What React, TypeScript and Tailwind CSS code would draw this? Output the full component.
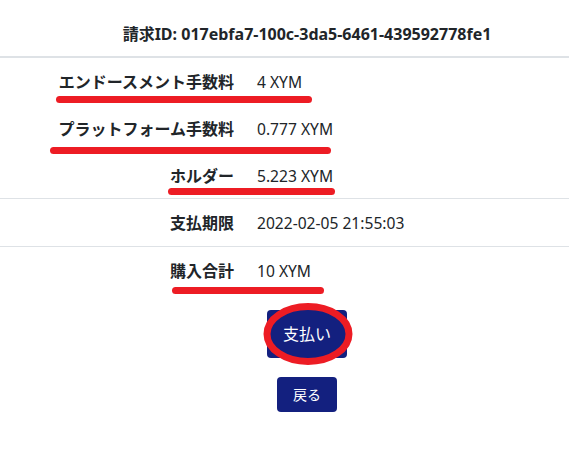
import React from "react";

const rows1 = [
  { label: "エンドースメント手数料", value: "4 XYM", h: "h-[47px]" },
  { label: "プラットフォーム手数料", value: "0.777 XYM", h: "h-[48px]" },
  { label: "ホルダー", value: "5.223 XYM", h: "h-[45px]" },
];

function Row({ label, value, h }: { label: string; value: string; h: string }) {
  return (
    <div className={`grid grid-cols-[246px_1fr] items-center ${h}`}>
      <div className="text-right pr-3 font-bold text-[16px] text-[#212529] leading-6">{label}</div>
      <div className="pl-[11px] text-[15.6px] text-[#212529] leading-6">{value}</div>
    </div>
  );
}

export default function App() {
  return (
    <div
      className="relative w-[569px] h-[455px] bg-white overflow-hidden"
      style={{ fontFamily: '"Noto Sans", "Noto Sans CJK JP", sans-serif' }}
    >
      <div className="h-[58px] border-b-2 border-[#dee2e6] pt-3 pl-[45px] flex items-center justify-center">
        <div className="font-bold text-[16px] text-[#212529] leading-6">
          請求ID: 017ebfa7-100c-3da5-6461-439592778fe1
        </div>
      </div>
      {rows1.map((r) => (
        <Row key={r.label} {...r} />
      ))}
      <div className="border-t border-[#dee2e6]">
        <Row label="支払期限" value="2022-02-05 21:55:03" h="h-[47px]" />
      </div>
      <div className="border-t border-[#dee2e6]">
        <Row label="購入合計" value="10 XYM" h="h-[47px]" />
      </div>
      <div className="pl-[45px] flex flex-col items-center mt-[16px]">
        <button className="w-[80px] h-[48px] rounded-[4px] bg-[#13207f] text-white text-[16px]">支払い</button>
        <button className="mt-[19px] w-[60px] h-[35px] rounded-[4px] bg-[#13207f] text-white text-[14px]">戻る</button>
      </div>

      {/* red annotations */}
      <div className="absolute left-[56px] top-[96px] w-[256px] h-[7px] rounded-full bg-[#ed1c24]" />
      <div className="absolute left-[50px] top-[147px] w-[281px] h-[7px] rounded-full bg-[#ed1c24]" />
      <div className="absolute left-[168px] top-[188px] w-[167px] h-[7px] rounded-full bg-[#ed1c24]" />
      <div className="absolute left-[172px] top-[287px] w-[152px] h-[7px] rounded-full bg-[#ed1c24]" />
      <svg className="absolute left-[263px] top-[303px]" width="90" height="62" viewBox="0 0 90 62">
        <ellipse cx="45" cy="31" rx="41" ry="27.5" fill="none" stroke="#ed1c24" strokeWidth="7" />
      </svg>
    </div>
  );
}
